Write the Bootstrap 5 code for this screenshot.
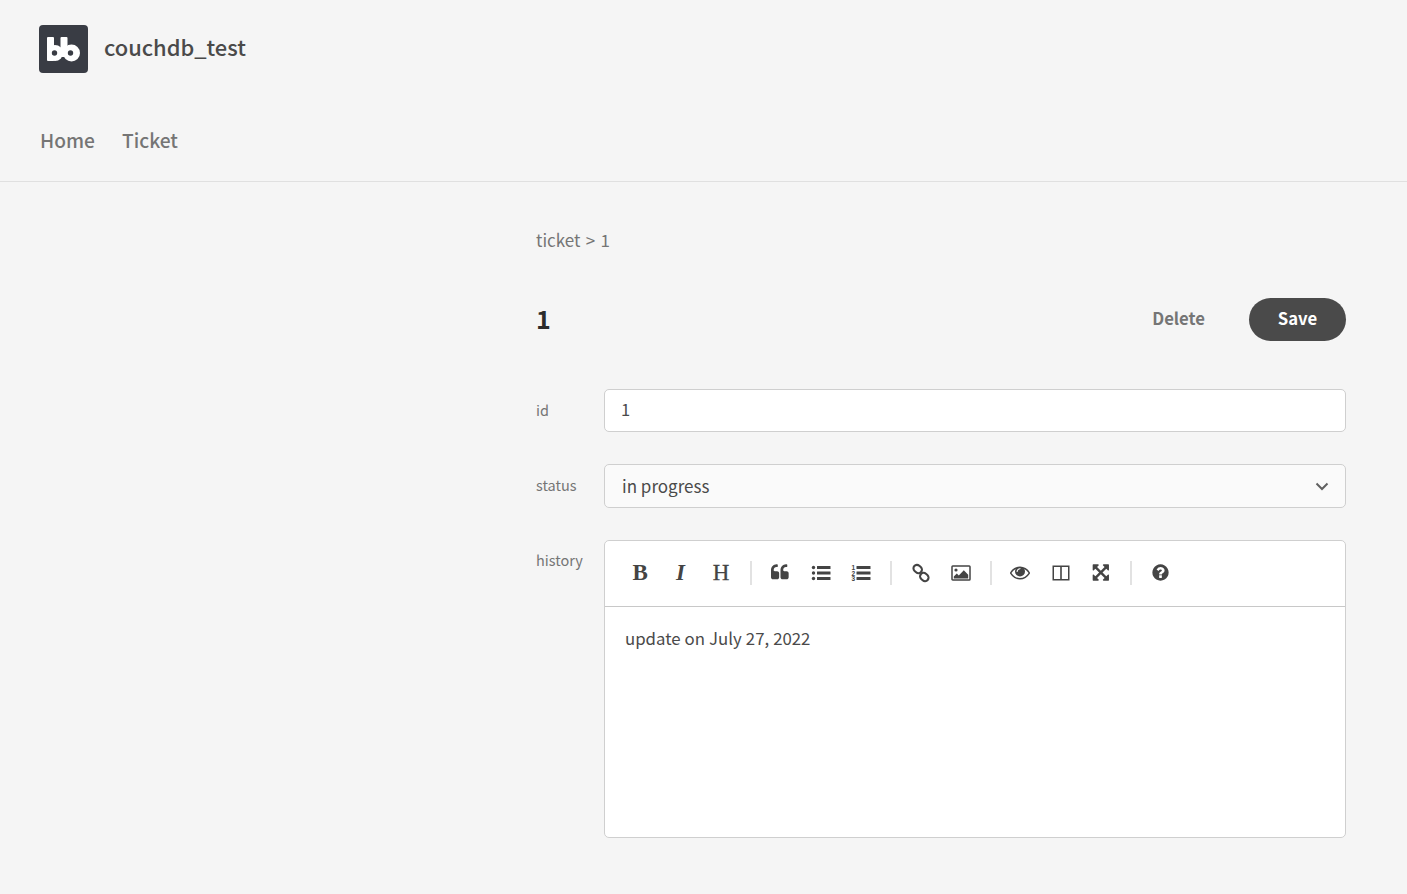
<!DOCTYPE html>
<html lang="en">
<head>
  <meta charset="UTF-8" />
  <title>couchdb_test</title>
  <link href="https://cdn.jsdelivr.net/npm/bootstrap@5.3.3/dist/css/bootstrap.min.css" rel="stylesheet">
  <style>
    body { background: #f5f5f5; color: #4a4a4a; font-family: "Noto Sans CJK SC", "Liberation Sans", sans-serif; font-size: 14.5px; }
    .top-head { height: 182px; border-bottom: 1px solid #e0e0e0; padding: 25px 39px 0; }
    .app-logo { width: 49px; height: 48px; border-radius: 4px; background: #393c44; }
    .app-name { font-size: 21.900px; font-weight: 500; line-height: 44px; margin-left: 16px; color: #4a4a4a; }
    .top-links { margin-top: 54px; gap: 26px; }
    .top-links a { font-size: 19.200px; line-height: 26px; font-weight: 500; color: #757575; text-decoration: none; margin-left: 1px; }
    .page-area { width: 810px; margin: 0 61px 0 auto; }
    .crumbs { margin-top: 46px; line-height: 24px; font-size: 17px; word-spacing: 1.500px; color: #757575; }
    .title-row { margin-top: 46px; height: 43px; }
    .title-row h1 { font-size: 25px; font-weight: 700; line-height: 41px; margin: 0 0 2px; color: #2c2c2c; }
    .btn-del { font-size: 16.700px; font-weight: 700; color: #757575; padding: 0 0 2px; border: 0; margin-right: 44px; }
    .btn-save { width: 97px; height: 43px; padding: 0 0 2px; border: 0; border-radius: 22px; background: #4a4a4a; color: #fff; font-size: 16.700px; font-weight: 700; }
    .field-row { display: flex; margin-bottom: 32px; }
    .field-label { width: 68px; font-size: 14.5px; color: #757575; padding-bottom: 2px; }
    .history-label { padding-top: 9px; }
    .field-box { flex: 1; }
    .form-control.plain-input { height: 43px; padding: 0 16px 3px; border-color: #cfcfcf; border-radius: 5px; color: #4a4a4a; font-size: 16.5px; }
    .form-select.plain-select { height: 44px; padding: 0 17px; border-color: #cfcfcf; border-radius: 5px; color: #4a4a4a; font-size: 17px; background: #fafafa url("data:image/svg+xml,%3csvg xmlns='http://www.w3.org/2000/svg' viewBox='0 0 14 9'%3e%3cpath fill='none' stroke='%23606060' stroke-width='2' d='M1.500 1.500 7 7l5.500-5.500'/%3e%3c/svg%3e") no-repeat right 16px center / 14px 9px; }
    .md-box { height: 298px; background: #fff; border: 1px solid #cfcfcf; border-radius: 5px; }
    .md-tools { height: 66px; padding: 0 0 2px 15px; border-bottom: 1px solid #c8c8c8; }
    .tool-btn { width: 40.400px; height: 30px; display: flex; align-items: center; justify-content: center; color: #444; font: 700 23px/30px "Liberation Serif", serif; }
    .tool-btn.slanted { font-style: italic; }
    .tool-btn.thin-h { font-weight: 400; -webkit-text-stroke: .3px #444; }
    .tool-btn svg { width: 20px; height: 20px; fill: #444; }
    .tool-btn svg.tight-icon { width: 19px; height: 19px; }
    .tool-sep { width: 2px; height: 24px; margin: 0 8px 0 9px; background: #e2e2e2; }
    .md-text { padding: 18px 20px; font-size: 16.800px; word-spacing: .3px; line-height: 26px; color: #4a4a4a; }
  </style>
</head>
<body>

<header class="top-head">
  <div class="d-flex">
    <svg class="app-logo" viewBox="0 0 49 48">
      <g fill="#fff">
        <rect x="8" y="12" width="7" height="24" rx="1"/>
        <circle cx="16" cy="28" r="8"/>
        <rect x="21.500" y="12" width="7" height="20" rx="1"/>
        <circle cx="32.500" cy="28" r="8.500"/>
      </g>
      <circle cx="15.500" cy="28" r="2.700" fill="#393c44"/>
      <circle cx="31.500" cy="28" r="2.700" fill="#393c44"/>
    </svg>
    <div class="app-name">couchdb_test</div>
  </div>
  <nav class="top-links d-flex">
    <a href="#">Home</a>
    <a href="#">Ticket</a>
  </nav>
</header>

<main class="page-area">
  <div class="crumbs">ticket &gt; 1</div>

  <div class="title-row d-flex align-items-center justify-content-between">
    <h1>1</h1>
    <div class="d-flex align-items-center">
      <button type="button" class="btn btn-del">Delete</button>
      <button type="button" class="btn btn-save">Save</button>
    </div>
  </div>

  <div class="mt-5">
    <div class="field-row align-items-center">
      <label class="field-label">id</label>
      <div class="field-box"><input class="form-control plain-input" value="1"></div>
    </div>
    <div class="field-row align-items-center">
      <label class="field-label">status</label>
      <div class="field-box">
        <select class="form-select plain-select"><option>in progress</option></select>
      </div>
    </div>
    <div class="field-row">
      <label class="field-label history-label">history</label>
      <div class="field-box md-box">
        <div class="md-tools d-flex align-items-center">
          <span class="tool-btn">B</span>
          <span class="tool-btn slanted">I</span>
          <span class="tool-btn thin-h">H</span>
          <i class="tool-sep"></i>
          <span class="tool-btn"><svg class="tight-icon" viewBox="0 0 1792 1792"><path d="M768 960v384q0 80-56 136t-136 56h-384q-80 0-136-56t-56-136v-704q0-104 40.500-198.500t109.500-163.500 163.500-109.500 198.500-40.500h64q26 0 45 19t19 45v128q0 26-19 45t-45 19h-64q-106 0-181 75t-75 181v32q0 40 28 68t68 28h224q80 0 136 56t56 136zm896 0v384q0 80-56 136t-136 56h-384q-80 0-136-56t-56-136v-704q0-104 40.500-198.500t109.500-163.500 163.500-109.500 198.500-40.500h64q26 0 45 19t19 45v128q0 26-19 45t-45 19h-64q-106 0-181 75t-75 181v32q0 40 28 68t68 28h224q80 0 136 56t56 136z"/></svg></span>
          <span class="tool-btn"><svg viewBox="0 0 20 20"><circle cx="2.500" cy="4.500" r="1.700"/><circle cx="2.500" cy="10" r="1.700"/><circle cx="2.500" cy="15.500" r="1.700"/><rect x="6" y="3" width="13.500" height="3" rx=".3"/><rect x="6" y="8.500" width="13.500" height="3" rx=".3"/><rect x="6" y="14" width="13.500" height="3" rx=".3"/></svg></span>
          <span class="tool-btn"><svg viewBox="0 0 20 20"><rect x="5.500" y="3" width="14" height="3" rx=".3"/><rect x="5.500" y="8.500" width="14" height="3" rx=".3"/><rect x="5.500" y="14" width="14" height="3" rx=".3"/><text x="0.500" y="7" font-size="6.500" font-family="Liberation Sans, sans-serif" font-weight="700">1</text><text x="0.500" y="12.500" font-size="6.500" font-family="Liberation Sans, sans-serif" font-weight="700">2</text><text x="0.500" y="18" font-size="6.500" font-family="Liberation Sans, sans-serif" font-weight="700">3</text></svg></span>
          <i class="tool-sep"></i>
          <span class="tool-btn"><svg viewBox="0 0 20 20"><g fill="none" stroke="#444" stroke-width="2.100"><rect x="2.200" y="2.500" width="9" height="7" rx="3.500" transform="rotate(42 6.700 6)"/><rect x="8.800" y="10.500" width="9" height="7" rx="3.500" transform="rotate(42 13.300 14)"/></g></svg></span>
          <span class="tool-btn"><svg viewBox="0 0 20 20"><rect x="1" y="3" width="18" height="14" rx=".8" fill="none" stroke="#444" stroke-width="1.500"/><circle cx="5" cy="7" r="1.600"/><path d="M2.800 15.400v-1.900l3-3 2 2 5-5.300 4.400 4.500v3.700z"/></svg></span>
          <i class="tool-sep"></i>
          <span class="tool-btn"><svg viewBox="0 0 1792 1792"><path d="M1664 960q-152-236-381-353 61 104 61 225 0 185-131.500 316.500t-316.500 131.500-316.500-131.500-131.500-316.500q0-121 61-225-229 117-381 353 133 205 333.500 326.500t434.500 121.500 434.500-121.500 333.500-326.500zm-720-384q0-20-14-34t-34-14q-125 0-214.500 89.500t-89.500 214.500q0 20 14 34t34 14 34-14 14-34q0-86 61-147t147-61q20 0 34-14t14-34zm848 384q0 34-20 69-140 230-376.500 368.500t-499.500 138.500-499.500-139-376.500-368q-20-35-20-69t20-69q140-229 376.500-368t499.500-139 499.500 139 376.500 368q20 35 20 69z" transform="translate(0 -64)"/></svg></span>
          <span class="tool-btn"><svg viewBox="0 0 20 20"><path fill-rule="evenodd" d="M1.500 2.500h17v15h-17zM3 4v12h6.200V4zM10.800 4v12H17V4z"/></svg></span>
          <span class="tool-btn"><svg class="tight-icon" viewBox="-64 -128 1792 1792"><path d="M1283 413l-355 355 355 355 144-144q29-31 70-14 39 17 39 59v448q0 26-19 45t-45 19h-448q-42 0-59-40-17-39 14-69l144-144-355-355-355 355 144 144q31 30 14 69-17 40-59 40h-448q-26 0-45-19t-19-45v-448q0-42 40-59 39-17 69 14l144 144 355-355-355-355-144 144q-19 19-45 19-12 0-24-5-40-17-40-59v-448q0-26 19-45t45-19h448q42 0 59 40 17 39-14 69l-144 144 355 355 355-355-144-144q-31-30-14-69 17-40 59-40h448q26 0 45 19t19 45v448q0 42-39 59-13 5-25 5-26 0-45-19z"/></svg></span>
          <i class="tool-sep"></i>
          <span class="tool-btn"><svg class="tight-icon" viewBox="0 0 1792 1792"><path d="M1024 1376v-192q0-14-9-23t-23-9h-192q-14 0-23 9t-9 23v192q0 14 9 23t23 9h192q14 0 23-9t9-23zm256-672q0-88-55.500-163t-138.500-116-170-41q-243 0-371 213-15 24 8 42l132 100q7 6 19 6 16 0 25-12 53-68 86-92 34-24 86-24 48 0 85.500 26t37.500 59q0 38-20 61t-68 45q-63 28-115.500 86.500t-52.500 125.500v36q0 14 9 23t23 9h192q14 0 23-9t9-23q0-19 21.500-49.500t54.500-49.500q32-18 49-28.500t46-35 44.500-48 28-60.500 12.500-81zm384 192q0 209-103 385.500t-279.500 279.500-385.500 103-385.500-103-279.500-279.500-103-385.500 103-385.500 279.500-279.500 385.500-103 385.500 103 279.500 279.500 103 385.500z"/></svg></span>
        </div>
        <div class="md-text">update on July 27, 2022</div>
      </div>
    </div>
  </div>
</main>

<script src="https://cdn.jsdelivr.net/npm/bootstrap@5.3.3/dist/js/bootstrap.bundle.min.js"></script>
</body>
</html>
